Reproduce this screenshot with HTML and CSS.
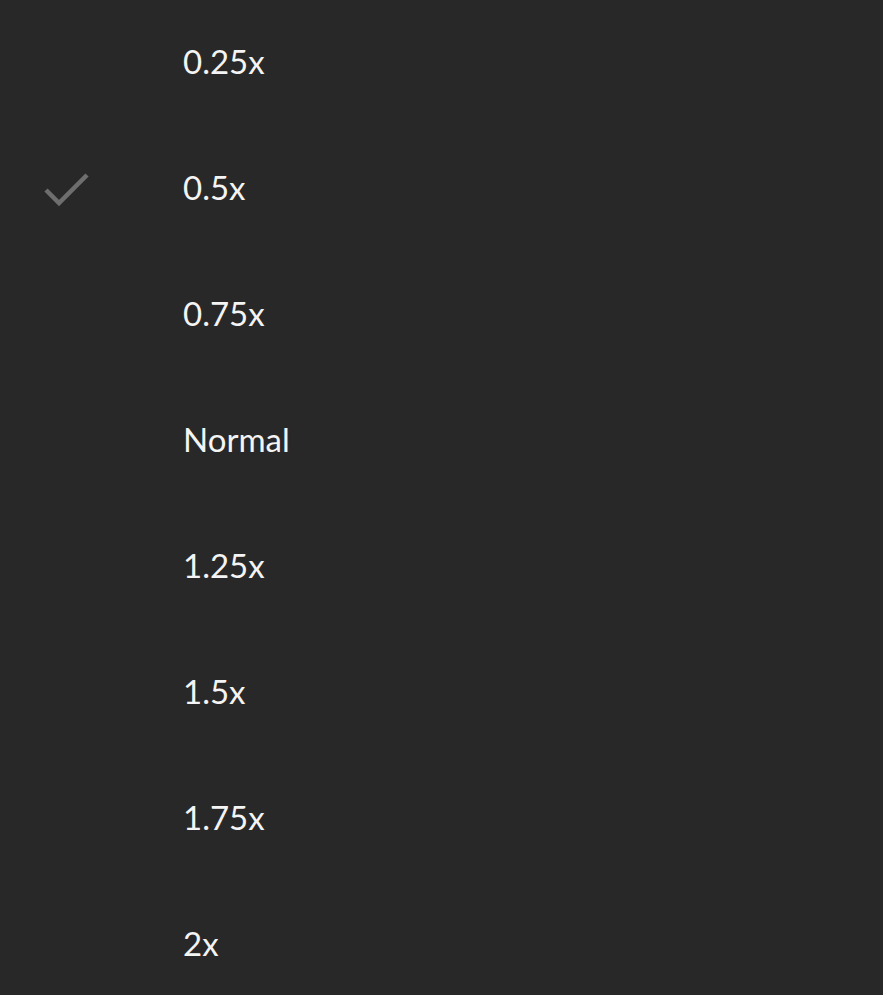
FILE: index.html
```html
<!DOCTYPE html>
<html lang="en">
<head>
    <title>Playback speed</title>
    <link rel="stylesheet" href="styles.css">
</head>
<body>
    <ul class="speed-list">
        <li class="speed-item"><span class="check"></span><span class="label">0.25x</span></li>
        <li class="speed-item selected">
            <span class="check">
                <svg width="48" height="36" viewBox="0 0 48 36">
                    <path d="M3 19 L16 32 L44 4" fill="none" stroke="#6e6e6e" stroke-width="4.5"/>
                </svg>
            </span>
            <span class="label">0.5x</span>
        </li>
        <li class="speed-item"><span class="check"></span><span class="label">0.75x</span></li>
        <li class="speed-item"><span class="check"></span><span class="label">Normal</span></li>
        <li class="speed-item"><span class="check"></span><span class="label">1.25x</span></li>
        <li class="speed-item"><span class="check"></span><span class="label">1.5x</span></li>
        <li class="speed-item"><span class="check"></span><span class="label">1.75x</span></li>
        <li class="speed-item"><span class="check"></span><span class="label">2x</span></li>
    </ul>
</body>
</html>
```
FILE: styles.css
```css
body {
    margin: 0;
    background: #282828;
    font-family: Lato, "Noto Sans", sans-serif;
    height: 995px;
    overflow: hidden;
}

.speed-list {
    list-style: none;
    margin: 0;
    padding: 0;
}

.speed-item {
    display: flex;
    align-items: center;
    box-sizing: border-box;
    height: 126px;
    padding-left: 43px;
}

.check {
    width: 48px;
    height: 36px;
    margin-right: 92px;
    display: flex;
}

.label {
    color: #f4f4f4;
    font-size: 33px;
    margin-top: -4px;
}
```
